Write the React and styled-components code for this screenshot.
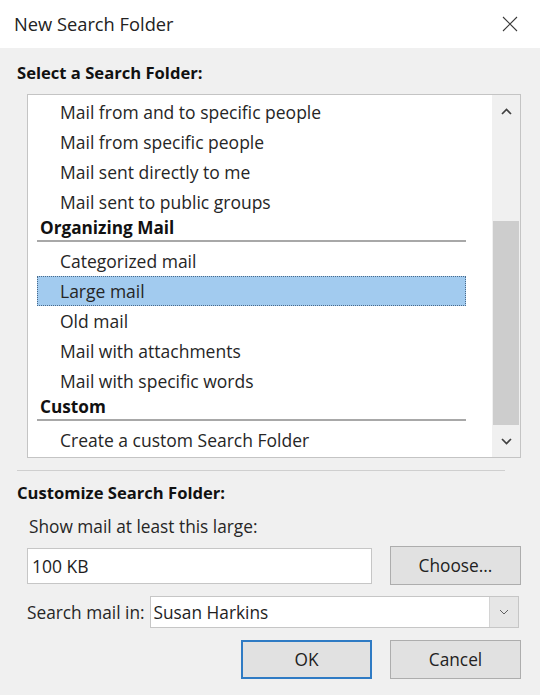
import React from 'react';
import styled, { createGlobalStyle } from 'styled-components';

const GlobalStyle = createGlobalStyle`
    html, body {
        margin: 0;
        padding: 0;
        background: #f0f0f0;
    }
    body {
        font-family: "Open Sans", "Noto Sans", sans-serif;
        color: #1e1e1e;
    }
`;

const folderGroups = [
    {
        title: null,
        items: [
            'Mail from and to specific people',
            'Mail from specific people',
            'Mail sent directly to me',
            'Mail sent to public groups',
        ],
    },
    {
        title: 'Organizing Mail',
        items: [
            'Categorized mail',
            'Large mail',
            'Old mail',
            'Mail with attachments',
            'Mail with specific words',
        ],
    },
    {
        title: 'Custom',
        items: ['Create a custom Search Folder'],
    },
];

const Chevron = ({ up }) => (
    <svg width="11" height="7" viewBox="0 0 11 7">
        <path
            d={up ? 'M1 6 L5.5 1.5 L10 6' : 'M1 1 L5.5 5.5 L10 1'}
            fill="none"
            stroke="#404040"
            strokeWidth="1.7"
        />
    </svg>
);

export default function App() {
    const selected = 'Large mail';

    return (
        <>
        <GlobalStyle />
        <Dialog>
            <TitleBar>
                <Title>New Search Folder</Title>
                <CloseButton>
                    <svg width="16" height="16" viewBox="0 0 16 16">
                        <path d="M1 1 L15 15 M15 1 L1 15" stroke="#3a3a3a" strokeWidth="1.1" />
                    </svg>
                </CloseButton>
            </TitleBar>
            <Body>
                <SectionHeading>Select a Search Folder:</SectionHeading>
                <ListBox>
                    <ListItems>
                        {folderGroups.map((group, gi) => (
                            <React.Fragment key={gi}>
                                {group.title && <GroupHeader>{group.title}</GroupHeader>}
                                {group.items.map(item => (
                                    <ListRow key={item} $selected={item === selected}>{item}</ListRow>
                                ))}
                            </React.Fragment>
                        ))}
                    </ListItems>
                    <ScrollBar>
                        <ScrollArrow><Chevron up /></ScrollArrow>
                        <ScrollTrack>
                            <ScrollThumb />
                        </ScrollTrack>
                        <ScrollArrow><Chevron /></ScrollArrow>
                    </ScrollBar>
                </ListBox>
                <Divider />
                <SectionHeading $spaced>Customize Search Folder:</SectionHeading>
                <FieldLabel>Show mail at least this large:</FieldLabel>
                <FieldRow>
                    <TextBox>100 KB</TextBox>
                    <Button>Choose...</Button>
                </FieldRow>
                <ComboRow>
                    <ComboLabel>Search mail in:</ComboLabel>
                    <ComboBox>
                        <ComboValue>Susan Harkins</ComboValue>
                        <ComboButton>
                            <svg width="10" height="6" viewBox="0 0 10 6">
                                <path d="M1 1 L5 5 L9 1" fill="none" stroke="#606060" strokeWidth="1" />
                            </svg>
                        </ComboButton>
                    </ComboBox>
                </ComboRow>
                <ButtonRow>
                    <Button $default>OK</Button>
                    <Button>Cancel</Button>
                </ButtonRow>
            </Body>
        </Dialog>
        </>
    );
}

const Dialog = styled.div`
    width: 540px;
    height: 695px;
    display: flex;
    flex-direction: column;
    background: #f0f0f0;
    overflow: hidden;
`;

const TitleBar = styled.div`
    height: 48px;
    flex-shrink: 0;
    background: #ffffff;
    display: flex;
    align-items: center;
    justify-content: space-between;
    padding: 0 22px 0 14px;
`;

const Title = styled.div`
    font-size: 18.3px;
    color: #222;
    margin-top: -2px;
`;

const CloseButton = styled.div`
    display: flex;
    width: 16px;
    height: 16px;
`;

const Body = styled.div`
    display: flex;
    flex-direction: column;
    padding-top: 15px;
`;

const SectionHeading = styled.div`
    font-size: 16.6px;
    font-weight: 700;
    line-height: 20px;
    padding-left: 17px;
    margin-top: ${p => (p.$spaced ? '12px' : '0')};
    color: #111;
`;

const ListBox = styled.div`
    margin: 11px 0 0 27px;
    width: 494px;
    height: 364px;
    box-sizing: border-box;
    border: 1px solid #c4c4c4;
    background: #fff;
    display: flex;
`;

const ListItems = styled.div`
    flex: 1;
    padding: 2px 26px 0 9px;
    display: flex;
    flex-direction: column;
    overflow: hidden;
`;

const GroupHeader = styled.div`
    font-size: 17.2px;
    font-weight: 700;
    line-height: 22px;
    padding: 0 0 1px 3px;
    border-bottom: 2px solid #a8a8a8;
    margin-bottom: 4px;
    color: #111;
`;

const ListRow = styled.div`
    height: 30px;
    flex-shrink: 0;
    box-sizing: border-box;
    display: flex;
    align-items: center;
    padding-left: 22px;
    font-size: 17.5px;
    color: #262626;
    white-space: nowrap;
    background: ${p => (p.$selected ? '#a2cbef' : 'transparent')};
    border: 1px dotted ${p => (p.$selected ? '#4a6a8a' : 'transparent')};
`;

const ScrollBar = styled.div`
    width: 28px;
    background: #f0f0f0;
    display: flex;
    flex-direction: column;
`;

const ScrollArrow = styled.div`
    height: 32px;
    display: flex;
    align-items: center;
    justify-content: center;
`;

const ScrollTrack = styled.div`
    flex: 1;
    display: flex;
    flex-direction: column;
    justify-content: flex-end;
    padding: 0 1px;
`;

const ScrollThumb = styled.div`
    height: 204px;
    background: #cdcdcd;
`;

const Divider = styled.div`
    margin: 12px 35px 0 17px;
    border-top: 1px solid #cfcfcf;
`;

const FieldLabel = styled.div`
    font-size: 17.3px;
    line-height: 20px;
    padding-left: 29px;
    margin-top: 14px;
    color: #262626;
`;

const FieldRow = styled.div`
    display: flex;
    align-items: center;
    margin: 9px 0 0 27px;
    gap: 18px;
`;

const TextBox = styled.div`
    width: 345px;
    height: 36px;
    box-sizing: border-box;
    border: 1px solid #c6c6c6;
    background: #fff;
    display: flex;
    align-items: center;
    padding-left: 4px;
    font-size: 17.5px;
    color: #1e1e1e;
`;

const Button = styled.div`
    width: 131px;
    height: 39px;
    box-sizing: border-box;
    border: ${p => (p.$default ? '2px solid #2f7bc4' : '1px solid #adadad')};
    background: #e1e1e1;
    display: flex;
    align-items: center;
    justify-content: center;
    font-size: 17.3px;
    color: #222;
`;

const ComboRow = styled.div`
    display: flex;
    align-items: center;
    margin: 11px 0 0 27px;
    gap: 5px;
`;

const ComboLabel = styled.div`
    font-size: 17.3px;
    color: #262626;
`;

const ComboBox = styled.div`
    width: 369px;
    height: 32px;
    box-sizing: border-box;
    border: 1px solid #c6c6c6;
    background: #fff;
    display: flex;
    align-items: stretch;
`;

const ComboValue = styled.div`
    flex: 1;
    display: flex;
    align-items: center;
    padding-left: 3px;
    font-size: 17.3px;
    color: #1e1e1e;
`;

const ComboButton = styled.div`
    width: 28px;
    background: #e6e6e6;
    border-left: 1px solid #d4d4d4;
    display: flex;
    align-items: center;
    justify-content: center;
`;

const ButtonRow = styled.div`
    display: flex;
    justify-content: flex-end;
    gap: 18px;
    margin: 12px 19px 0 0;
`;
